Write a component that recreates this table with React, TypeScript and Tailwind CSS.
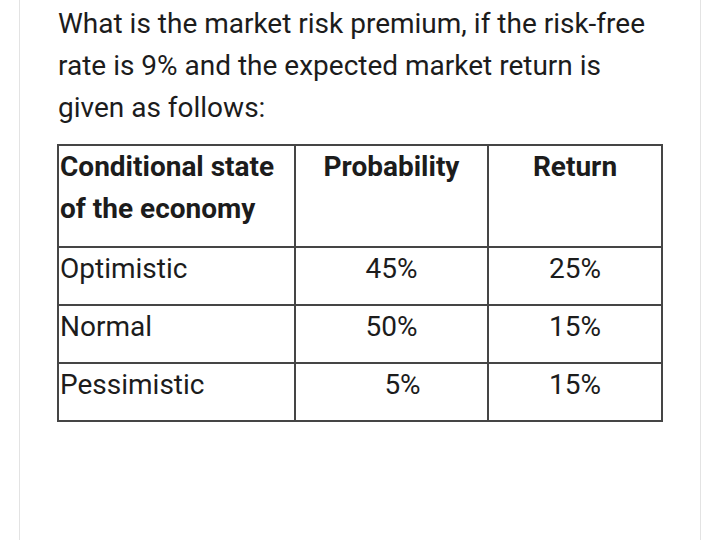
const rows = [
  { state: "Optimistic", prob: "45%", ret: "25%" },
  { state: "Normal", prob: "50%", ret: "15%" },
  { state: "Pessimistic", prob: "5%", ret: "15%" },
];

export default function App() {
  return (
    <div
      className="min-h-screen bg-white text-[#1c1c1c]"
      style={{ fontFamily: "Roboto, 'Noto Sans', sans-serif" }}
    >
      <div className="mx-[19px] min-h-screen border-x border-[#e3e3e3] pl-[38px] pr-[38px] pt-[3px]">
        <p className="text-[28px] leading-[42px]">
          What is the market risk premium, if the risk-free rate is 9% and the
          expected market return is given as follows:
        </p>

        <table className="-ml-[1px] mt-[15px] w-[604px] table-fixed border-collapse text-[28px] leading-[42px]">
          <colgroup>
            <col className="w-[237px]" />
            <col className="w-[193px]" />
            <col className="w-[174px]" />
          </colgroup>
          <thead>
            <tr>
              <th className="border-2 border-[#454545] px-[1px] pb-[16px] text-left align-top font-bold">
                Conditional state of the economy
              </th>
              <th className="border-2 border-[#454545] pb-[16px] text-center align-top font-bold">
                Probability
              </th>
              <th className="border-2 border-[#454545] pb-[16px] text-center align-top font-bold">
                Return
              </th>
            </tr>
          </thead>
          <tbody>
            {rows.map((r) => (
              <tr key={r.state}>
                <td className="border-2 border-[#454545] px-[1px] pb-[14px] align-top">
                  {r.state}
                </td>
                <td className="border-2 border-[#454545] pb-[14px] text-center align-top">
                  {r.prob === "5%" ? <span className="pl-[22px]">{r.prob}</span> : r.prob}
                </td>
                <td className="border-2 border-[#454545] pb-[14px] text-center align-top">
                  {r.ret}
                </td>
              </tr>
            ))}
          </tbody>
        </table>
      </div>
    </div>
  );
}
